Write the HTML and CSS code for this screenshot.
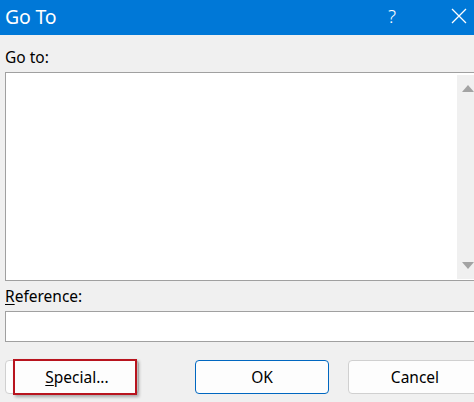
FILE: index.html
```html
<!DOCTYPE html>
<html>
<head>
<meta charset="utf-8">
<link rel="stylesheet" href="styles.css">
</head>
<body>
<div class="dialog">
  <div class="titlebar">
    <span class="title">Go To</span>
    <span class="help">?</span>
    <span class="close">
      <svg width="16" height="16" viewBox="0 0 16 16"><path d="M1 1 L15 15 M15 1 L1 15" stroke="#fff" stroke-width="1.3" fill="none"/></svg>
    </span>
  </div>
  <div class="content">
    <div class="label">Go to:</div>
    <div class="listbox">
      <div class="scrollbar">
        <svg class="arrow" width="12" height="8" viewBox="0 0 12 8"><path d="M0 8 L6 1 L12 8 Z" fill="#a3a3a3"/></svg>
        <svg class="arrow" width="12" height="8" viewBox="0 0 12 8"><path d="M0 0 L6 7 L12 0 Z" fill="#a3a3a3"/></svg>
      </div>
    </div>
    <div class="label label-ref"><u>R</u>eference:</div>
    <div class="textbox"></div>
    <div class="buttons">
      <div class="btn btn-special"><span><u>S</u>pecial...</span></div>
      <div class="btn btn-ok">OK</div>
      <div class="btn btn-cancel">Cancel</div>
      <div class="highlight"></div>
    </div>
  </div>
</div>
</body>
</html>
```

FILE: styles.css
```css
html, body {
  margin: 0;
  padding: 0;
  width: 474px;
  height: 402px;
  overflow: hidden;
  background: #f0f0f0;
  font-family: "Noto Sans", "Open Sans", "Liberation Sans", sans-serif;
  color: #000;
}
.dialog {
  width: 474px;
  height: 402px;
  overflow: hidden;
  background: #f0f0f0;
}
.titlebar {
  height: 35px;
  background: #0078d7;
  color: #fff;
  display: flex;
  align-items: center;
  position: relative;
}
.title {
  font-size: 19.5px;
  padding-left: 5px;
  line-height: 35px;
  margin-top: -3px;
  letter-spacing: -0.2px;
}
.help {
  margin-left: auto;
  font-size: 19px;
  margin-right: 55px;
  margin-top: -4px;
  font-weight: 300;
}
.close {
  display: flex;
  margin-right: 7px;
  margin-top: -4px;
}
.content {
  padding-left: 5px;
}
.label {
  font-size: 15.5px;
  line-height: 20px;
  margin-top: 12px;
  height: 20px;
}
.label u {
  text-decoration-thickness: 1px;
  text-underline-offset: 2px;
}
.listbox {
  margin-top: 5px;
  height: 207px;
  width: 480px;
  background: #fff;
  border: 1px solid #a0a0a0;
  position: relative;
  display: flex;
  justify-content: flex-start;
}
.scrollbar {
  margin-left: 451px;
  margin-top: 2px;
  margin-bottom: 1px;
  width: 20px;
  background: #f0f0f0;
  display: flex;
  flex-direction: column;
  justify-content: space-between;
  align-items: flex-start;
  padding: 9px 0 9px 5px;
  box-sizing: border-box;
}
.arrow {
  display: block;
}
.label-ref {
  margin-top: 5px;
}
.textbox {
  margin-top: 5px;
  height: 29px;
  width: 480px;
  background: #fff;
  border: 1px solid #a0a0a0;
}
.buttons {
  margin-top: 18px;
  display: flex;
  position: relative;
}
.btn {
  box-sizing: border-box;
  flex-shrink: 0;
  height: 34px;
  width: 134px;
  background: #fdfdfd;
  border: 1px solid #d0d0d0;
  border-radius: 4px;
  display: flex;
  align-items: center;
  justify-content: center;
  font-size: 15.5px;
}
.btn u {
  text-decoration-thickness: 1px;
  text-underline-offset: 2px;
}
.btn-special span {
  margin-left: 10px;
}
.btn-ok {
  margin-left: 56px;
  border: 1px solid #0067c0;
}
.btn-cancel {
  margin-left: 19px;
}
.highlight {
  position: absolute;
  left: 8px;
  top: -1px;
  width: 124px;
  height: 36px;
  box-sizing: border-box;
  border: 2px solid #b8141e;
  box-shadow: 2px 2px 3px rgba(0,0,0,0.3);
}
```
